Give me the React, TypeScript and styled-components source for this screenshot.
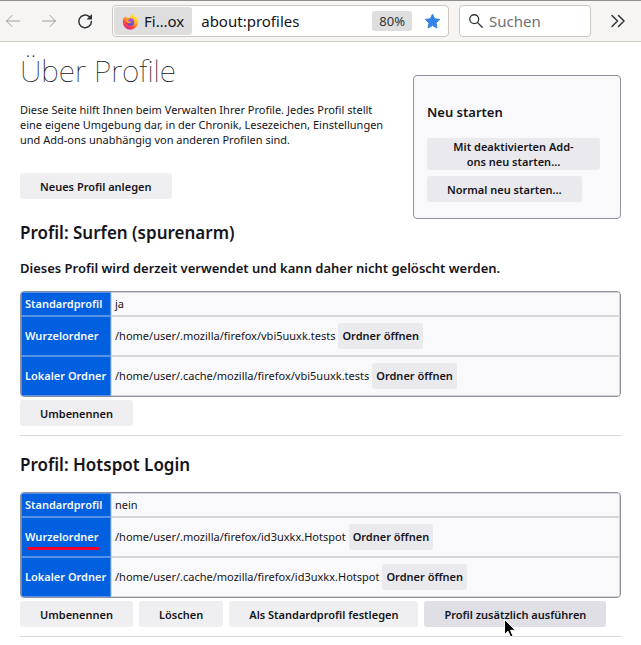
import React from "react";
import styled, { createGlobalStyle, css } from "styled-components";

const GlobalStyle = createGlobalStyle`
  *, *::before, *::after { box-sizing: border-box; }
  body {
    margin: 0;
    background: #fff;
    color: #15141a;
    font: 11px/15px "Noto Sans", "Open Sans", sans-serif;
  }
  button, input { font: inherit; color: inherit; }
`;

const Toolbar = styled.header`
  display: flex;
  align-items: center;
  height: 42px;
  padding: 0 14px 0 4px;
  background: #f6f5f4;
  border-top: 1px solid #918d8d;
  border-bottom: 1px solid #cdc7c2;
  color: #2e3436;
  font-size: 15px;
  line-height: 20px;
`;

const Nav = styled.nav`
  display: flex;
  flex: none;
  gap: 18px;
  margin-right: 18px;
`;

const IconButton = styled.button`
  display: flex;
  flex: none;
  padding: 0;
  border: 0;
  background: none;
  &:disabled { color: #a0a0a0; }
`;

const Field = styled.div`
  display: flex;
  align-items: center;
  height: 32px;
  background: #fff;
  border: 1px solid #cdc7c2;
  border-radius: 4px;
`;

const UrlField = styled(Field)`
  flex: 1 1 337px;
  min-width: 0;
  padding: 1px 7px 1px 1px;
`;

const SearchField = styled(Field)`
  flex: 0 0 132px;
  gap: 3px;
  margin: 0 18px 0 10px;
  padding: 0 8px;
`;

const Identity = styled.button`
  display: flex;
  flex: none;
  align-items: center;
  gap: 5px;
  height: 28px;
  padding: 0 8px;
  margin-right: 7px;
  border: 0;
  border-radius: 3px;
  background: #dedede;
  color: #15141a;
`;

const TextInput = styled.input`
  flex: 1;
  min-width: 0;
  width: 0;
  padding: 0 2px;
  border: 0;
  outline: 0;
  background: none;
  color: #15141a;
  &::placeholder { color: #6f7173; opacity: 1; }
`;

const Zoom = styled.button`
  flex: none;
  height: 20px;
  margin-right: 12px;
  padding: 0 7px;
  border: 0;
  border-radius: 3px;
  background: #dedede;
  font-size: 13px;
`;

const Page = styled.main`
  padding: 12px 20px 8px;
`;

const Intro = styled.section`
  display: flex;
  align-items: flex-start;
  gap: 20px;
`;

const IntroText = styled.div`
  flex: 1;
  min-width: 0;
`;

const Title = styled.h1`
  margin: 0 0 14px;
  font-size: 30px;
  line-height: 34px;
  font-weight: 100;
`;

const Paragraph = styled.p`
  margin: 0 0 26px;
`;

const Restart = styled.aside`
  flex: 0 0 208px;
  margin-top: 21px;
  padding: 26px 13px 16px;
  background: #f9f9fb;
  border: 1px solid #8f8f9d;
  border-radius: 4px;
`;

const RestartTitle = styled.h3`
  margin: 0 0 16px;
  font-size: 13px;
  line-height: 20px;
  font-weight: 600;
`;

const RestartActions = styled.div`
  display: flex;
  flex-direction: column;
  align-items: flex-start;
  gap: 6px;
`;

const Button = styled.button<{ $compact?: boolean; $hover?: boolean; $raised?: boolean }>`
  min-height: 26px;
  padding: 0 ${(p) => (p.$compact ? 4 : 20)}px;
  border: 0;
  border-radius: 3px;
  background: ${(p) => (p.$hover ? "#e0dfe6" : p.$raised ? "#eae9ee" : "#efeff1")};
  font-weight: 600;
  ${(p) => p.$raised && !p.$compact && css`
    max-width: 173px;
    padding-top: 1px;
    padding-bottom: 1px;
  `}
`;

const Profile = styled.section`
  border-bottom: 1px solid #d7d7db;
  padding-bottom: 9px;
`;

const ProfileTitle = styled.h2`
  margin: 0;
  padding: 16px 0 15px;
  font-size: 17px;
  line-height: 25px;
  font-weight: 600;
  ${Intro} + ${Profile} > & { padding-top: 1px; }
`;

const Note = styled.h3`
  margin: 0 0 14px;
  font-size: 13px;
  line-height: 17px;
  font-weight: 600;
`;

const Table = styled.table`
  width: 100%;
  border: 1px solid #8f8f9d;
  border-radius: 4px;
  border-spacing: 0;
  overflow: hidden;
  background: #f9f9fb;
`;

const cell = css`
  height: 40px;
  padding: 0 3px 1px;
  border: 1px solid rgba(190, 190, 196, 0.6);
  text-align: left;
  tr:first-child > & { height: 24px; }
`;

const HeadCell = styled.th`
  ${cell}
  width: 90px;
  background: #0060df;
  border-color: rgba(215, 225, 240, 0.4);
  color: #f9f9fb;
  font-weight: 600;
  white-space: nowrap;
`;

const Cell = styled.td`
  ${cell}
`;

const Path = styled.div`
  display: flex;
  align-items: center;
  gap: 3px;
`;

const Marked = styled.span`
  position: relative;
  &::after {
    content: "";
    position: absolute;
    left: 2px;
    right: 0;
    top: 18px;
    height: 3px;
    border-radius: 1px;
    background: #f0002f;
  }
`;

const Actions = styled.div`
  display: flex;
  flex-wrap: wrap;
  gap: 6px;
  margin-top: 3px;
`;

const PointerHost = styled.span`
  position: relative;
`;

const Pointer = styled.svg`
  position: absolute;
  left: 60px;
  top: 12px;
  overflow: visible;
  pointer-events: none;
`;

const Stroke = ({ d, size = 18, width = 1, solid }: { d: string; size?: number; width?: number; solid?: string }) => (
  <svg width={size} height={size} viewBox="0 0 18 18" fill="none" stroke="currentColor" strokeWidth={width} strokeLinecap="round" strokeLinejoin="round">
    <path d={d} />
    {solid && <path d={solid} fill="currentColor" stroke="none" />}
  </svg>
);

const FirefoxIcon = () => (
  <svg width="17" height="17" viewBox="0 0 17 17">
    <defs>
      <linearGradient id="fox" x1="0.8" y1="0.1" x2="0.25" y2="1">
        <stop offset="0" stopColor="#fff23a" />
        <stop offset="0.4" stopColor="#ffad1f" />
        <stop offset="0.68" stopColor="#ff4b3e" />
        <stop offset="1" stopColor="#e5169a" />
      </linearGradient>
      <linearGradient id="globe" x1="0.7" y1="0" x2="0.3" y2="1">
        <stop offset="0" stopColor="#b755f5" />
        <stop offset="1" stopColor="#5144cf" />
      </linearGradient>
    </defs>
    <path d="M10.8 0.4c0.2 1.6 1.4 2.3 2.4 3.3l0.7-0.3c1.5 1.5 2.3 3.4 2.3 5.5a7.7 7.7 0 0 1-15.4 0.1c0-2.1 0.6-3.9 1.6-5.2l0.2 1.2 1.2-2 0.5 1.8c1.3-0.4 2.6-0.1 3.4 0.5C8.2 3.4 9.4 1.4 10.8 0.4z" fill="url(#fox)" />
    <circle cx="8.5" cy="8.9" r="3.7" fill="url(#globe)" />
    <path d="M2.5 5.5c1.7-0.9 4-0.6 5.2 0.7-1.1 0.2-1.2 0.8-1.9 1.5 1.3 0.1 2.2 1.5 3.8 0.8-0.7 1.8-2.5 2.3-4 1.5C4.5 9.2 4.2 7.6 2.5 5.5z" fill="#ff9726" />
  </svg>
);

const StarIcon = () => (
  <svg width="17" height="17" viewBox="0 0 17 17" fill="#3584e4">
    <path d="M8.5 1.2L10.7 5.8 15.8 6.4 12 9.9 13 15 8.5 12.5 4 15 5 9.900 1.200 6.400 6.300 5.800z" stroke="#3584e4" strokeLinejoin="round" />
  </svg>
);

type ProfileData = { isDefault: string; root: string; local: string; marked?: boolean };

const ProfileTable = ({ isDefault, root, local, marked }: ProfileData) => (
  <Table>
    <tbody>
      <tr>
        <HeadCell scope="row">Standardprofil</HeadCell>
        <Cell>{isDefault}</Cell>
      </tr>
      <tr>
        <HeadCell scope="row">{marked ? <Marked>Wurzelordner</Marked> : "Wurzelordner"}</HeadCell>
        <Cell><Path>{root}<Button type="button" $compact $raised>Ordner öffnen</Button></Path></Cell>
      </tr>
      <tr>
        <HeadCell scope="row">Lokaler Ordner</HeadCell>
        <Cell><Path>{local}<Button type="button" $compact $raised>Ordner öffnen</Button></Path></Cell>
      </tr>
    </tbody>
  </Table>
);

export default function App() {
  return (
    <>
      <GlobalStyle />
      <Toolbar>
        <Nav>
          <IconButton disabled aria-label="Zurück"><Stroke d="M8 3.5L2.5 9 8 14.5M2.5 9H15.5" /></IconButton>
          <IconButton disabled aria-label="Vor"><Stroke d="M10 3.5L15.5 9 10 14.5M15.5 9H2.5" /></IconButton>
          <IconButton aria-label="Neu laden"><Stroke width={1.5} d="M15.4 9.5A6.3 6.3 0 1 1 13.2 4.6L14.5 6" solid="M16 2V7.5H10.500z" /></IconButton>
        </Nav>
        <UrlField>
          <Identity type="button"><FirefoxIcon />Fi…ox</Identity>
          <TextInput aria-label="Adresse" defaultValue="about:profiles" />
          <Zoom type="button">80%</Zoom>
          <IconButton aria-label="Lesezeichen bearbeiten"><StarIcon /></IconButton>
        </UrlField>
        <SearchField>
          <Stroke width={1.5} size={16} d="M12 7A5 5 0 1 1 2 7A5 5 0 1 1 12 7M10.8 10.8L16 16" />
          <TextInput aria-label="Suchen" placeholder="Suchen" />
        </SearchField>
        <IconButton aria-label="Weitere Werkzeuge"><Stroke width={1.5} d="M3 3.5L8.5 9 3 14.5M9.5 3.5L15 9 9.5 14.5" /></IconButton>
      </Toolbar>
      <Page>
        <Intro>
          <IntroText>
            <Title>Über Profile</Title>
            <Paragraph>
              Diese Seite hilft Ihnen beim Verwalten Ihrer Profile. Jedes Profil stellt eine eigene Umgebung dar, in der Chronik, Lesezeichen, Einstellungen und Add-ons unabhängig von anderen Profilen sind.
            </Paragraph>
            <Button type="button">Neues Profil anlegen</Button>
          </IntroText>
          <Restart>
            <RestartTitle>Neu starten</RestartTitle>
            <RestartActions>
              <Button type="button" $raised>Mit deaktivierten Add-ons neu starten…</Button>
              <Button type="button" $raised>Normal neu starten…</Button>
            </RestartActions>
          </Restart>
        </Intro>
        <Profile>
          <ProfileTitle>Profil: Surfen (spurenarm)</ProfileTitle>
          <Note>Dieses Profil wird derzeit verwendet und kann daher nicht gelöscht werden.</Note>
          <ProfileTable isDefault="ja" root="/home/user/.mozilla/firefox/vbi5uuxk.tests" local="/home/user/.cache/mozilla/firefox/vbi5uuxk.tests" />
          <Actions>
            <Button type="button">Umbenennen</Button>
          </Actions>
        </Profile>
        <Profile>
          <ProfileTitle>Profil: Hotspot Login</ProfileTitle>
          <ProfileTable marked isDefault="nein" root="/home/user/.mozilla/firefox/id3uxkx.Hotspot" local="/home/user/.cache/mozilla/firefox/id3uxkx.Hotspot" />
          <Actions>
            <Button type="button">Umbenennen</Button>
            <Button type="button">Löschen</Button>
            <Button type="button">Als Standardprofil festlegen</Button>
            <Button type="button" $hover>
              <PointerHost>
                Profil zusätzlich ausführen
                <Pointer width="12" height="19" viewBox="0 0 12 19">
                  <path d="M0.5 0.5V15.5L4 12.2 6.5 18 9 17 6.5 11.3H11.5z" fill="#000" stroke="#fff" />
                </Pointer>
              </PointerHost>
            </Button>
          </Actions>
        </Profile>
      </Page>
    </>
  );
}
